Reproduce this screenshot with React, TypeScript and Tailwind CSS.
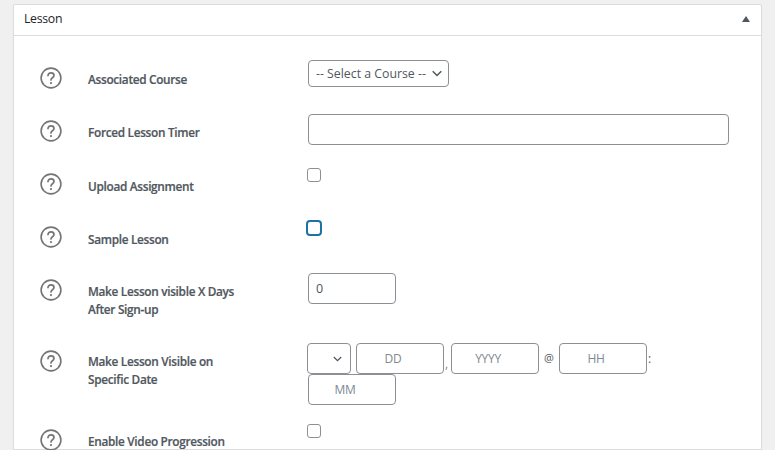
const font = { fontFamily: '"Open Sans", "Noto Sans", sans-serif' };

function Help() {
  return (
    <svg width="22" height="22" viewBox="0 0 22 22" className="shrink-0" fill="none">
      <circle cx="11" cy="11" r="9.9" stroke="#757575" strokeWidth="1.6" />
      <path d="M8 8.6c0-1.7 1.3-2.8 3-2.8s3 1.1 3 2.6c0 2.3-3 2.4-3 4.6" stroke="#757575" strokeWidth="1.7" strokeLinecap="round" />
      <circle cx="11" cy="16.1" r="1.1" fill="#757575" />
    </svg>
  );
}

function Chevron({ small }: { small?: boolean }) {
  return (
    <svg width={small ? 9 : 10} height={small ? 6 : 7} viewBox="0 0 10 7" fill="none" className="shrink-0">
      <path d="M0.7 1.2l4.3 4.3 4.3-4.3" stroke="#50575e" strokeWidth="1.5" />
    </svg>
  );
}

function Row({ label, h, iconTop, labelTop, children }: { label: React.ReactNode; h: string; iconTop: string; labelTop: string; children?: React.ReactNode }) {
  return (
    <div className={`flex ${h}`}>
      <div className={`w-[27px] ${iconTop} ml-[26px] shrink-0`}><Help /></div>
      <div className={`w-[220px] ml-[21px] shrink-0 text-[11.8px] tracking-[-0.3px] leading-[18px] font-semibold text-[#50575e] ${labelTop}`} style={{ WebkitTextStroke: "0.2px #50575e" }}>{label}</div>
      <div className="flex-1">{children}</div>
    </div>
  );
}

function Box({ text }: { text: string }) {
  return (
    <div className="w-[88px] h-[31px] border border-[#8c8f94] rounded-[4px] bg-white flex items-center justify-center pt-[1px] pr-[14px] text-[12px] tracking-[-0.3px] text-[#7e8993]">{text}</div>
  );
}

function Check({ active }: { active?: boolean }) {
  return active ? (
    <div className="w-[16px] h-[16px] -ml-[2px] -mt-[1px] rounded-[4px] border-2 border-[#1b74a4] bg-white" />
  ) : (
    <div className="w-[14px] h-[14px] -ml-[1px] rounded-[3px] border border-[#8c8f94] bg-white" />
  );
}

export default function App() {
  return (
    <div className="w-[775px] h-[450px] overflow-hidden bg-[#f0f0f1] pt-[4px] pl-[13px]" style={font}>
      <div className="w-[749px] h-[446px] bg-white border border-[#dcdcde] rounded-t-[2px] shadow-[0_1px_1px_rgba(0,0,0,0.04)]">
        <div className="h-[31px] border-b border-[#dcdcde] flex items-center justify-between pl-[10px] pr-[11px]">
          <span className="text-[12.3px] tracking-[-0.3px] text-[#1d2327] relative -top-[1px]">Lesson</span>
          <svg width="8" height="6" viewBox="0 0 8 6" className="relative -top-[1px]"><path d="M4 0L8 6H0z" fill="#50575e" /></svg>
        </div>
        <div className="pt-[25px]">
          <Row label="Associated Course" h="h-[53px]" iconTop="pt-[6px]" labelTop="pt-[9px]">
            <div className="w-[141px] h-[27px] -mt-[1px] border border-[#8c8f94] rounded-[4px] bg-white flex items-center justify-between pl-[7px] pr-[6px] text-[12.3px] text-[#50575e]">
              <span className="relative top-[1px]">-- Select a Course --</span>
              <Chevron />
            </div>
          </Row>
          <Row label="Forced Lesson Timer" h="h-[54px]" iconTop="pt-[6px]" labelTop="pt-[9px]">
            <div className="w-[421px] h-[31px] border border-[#8c8f94] rounded-[4px] bg-white" />
          </Row>
          <Row label="Upload Assignment" h="h-[53px]" iconTop="pt-[5px]" labelTop="pt-[9px]">
            <Check />
          </Row>
          <Row label="Sample Lesson" h="h-[52px]" iconTop="pt-[5px]" labelTop="pt-[9px]">
            <Check active />
          </Row>
          <Row label={<>Make Lesson visible X Days<br />After Sign-up</>} h="h-[70px]" iconTop="pt-[6px]" labelTop="pt-[9px]">
            <div className="w-[88px] h-[31px] border border-[#8c8f94] rounded-[4px] bg-white flex items-center pl-[7px] pt-[1px] text-[12.5px] text-[#50575e]">0</div>
          </Row>
          <Row label={<>Make Lesson Visible on<br />Specific Date</>} h="h-[81px]" iconTop="pt-[7px]" labelTop="pt-[9px]">
            <div className="flex items-center text-[12px] text-[#7e8993]">
              <div className="w-[44px] -ml-[1px] h-[31px] border border-[#8c8f94] rounded-[4px] bg-white flex items-center justify-end pr-[8px]"><Chevron small /></div>
              <div className="w-[5px]" />
              <Box text="DD" />
              <span className="w-[7px] self-end pb-[4px] pl-[1px] leading-none">,</span>
              <Box text="YYYY" />
              <span className="w-[20px] text-center text-[#50575e] text-[11px]">@</span>
              <Box text="HH" />
              <span className="pl-[1px] text-[#50575e]">:</span>
            </div>
            <Box text="MM" />
          </Row>
          <Row label="Enable Video Progression" h="h-[30px]" iconTop="pt-[5px]" labelTop="pt-[8px]">
            <Check />
          </Row>
        </div>
      </div>
    </div>
  );
}
